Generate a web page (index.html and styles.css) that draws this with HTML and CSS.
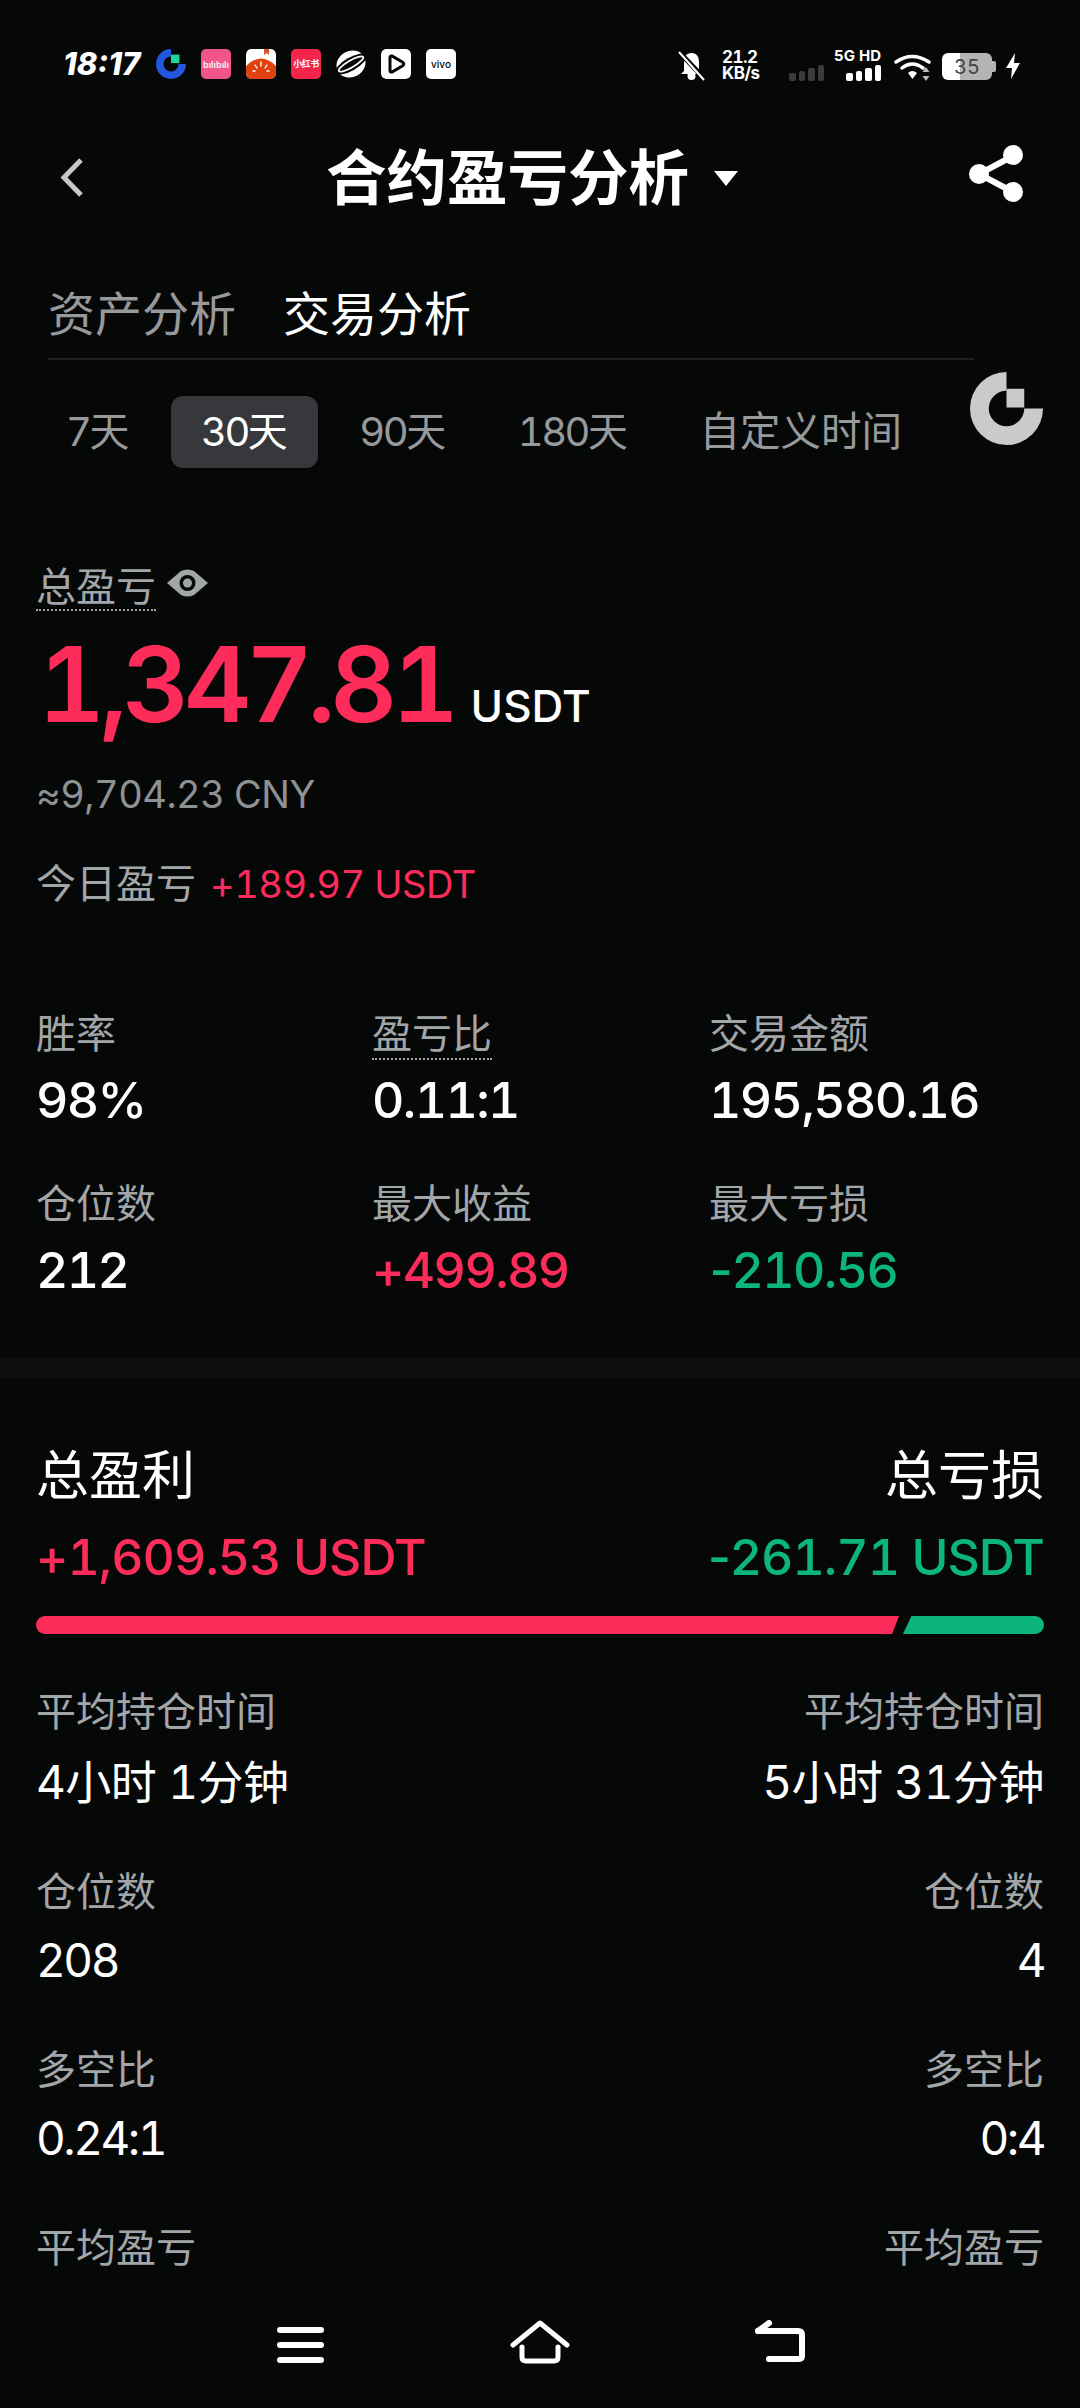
FILE: index.html
```html
<!DOCTYPE html>
<html lang="zh-CN">
<head>
    <meta charset="UTF-8">
    <meta name="viewport" content="width=device-width, initial-scale=1.0">
    <title>合约盈亏分析</title>
    <link rel="stylesheet" href="styles.css">
</head>
<body>
    <div class="page">
        <div class="main">
            <div class="statusbar">
                <span class="time">18:17</span>
                <div class="apps">
                    <svg class="app" viewBox="-16 -16 32 32"><path d="M0-16A16 16 0 1 0 16 0H8A8 8 0 1 1 0-8Z" fill="#2456e0"/><rect x="0" y="-10" width="9" height="9" fill="#1fd69a"/></svg>
                    <div class="app app-bili">bılıbılı</div>
                    <svg class="app" viewBox="0 0 30 30"><rect width="30" height="30" rx="5" fill="#fff"/><path d="M0 17Q15 2 30 17V25a5 5 0 0 1-5 5H5a5 5 0 0 1-5-5Z" fill="#e0430f"/><path d="M18 0h5v6l-2.500-2L18 6Z" fill="#d9502e"/><path d="M15 13v4M9 16l2 3M21 16l-2 3M7 22h2M21 22h2" stroke="#fff" stroke-width="1.300" stroke-linecap="round"/></svg>
                    <div class="app app-red">小红书</div>
                    <svg class="app" viewBox="-15 -15 30 30"><ellipse rx="15" ry="13" transform="rotate(-30)" fill="#fff"/><ellipse rx="18" ry="6.500" transform="rotate(-30)" fill="#060808"/><ellipse rx="14" ry="3.500" transform="rotate(-30)" fill="none" stroke="#fff" stroke-width="1.800"/></svg>
                    <svg class="app" viewBox="0 0 30 30"><rect width="30" height="30" rx="5" fill="#fff"/><path d="M9 8.500Q9 6.500 11 7L22 13.500Q23.500 15 22 16.500L11 23Q9 23.500 9 21.500Z" fill="none" stroke="#060808" stroke-width="3"/></svg>
                    <div class="app app-vivo">vivo</div>
                </div>
                <div class="status-right">
                    <svg class="st-bell" viewBox="0 0 27 30"><path d="M13.500 2C8 2 6 6 6 11V20L3 23H24L21 20V11C21 6 19 2 13.500 2Z" fill="#fff"/><circle cx="13.500" cy="25" r="4" fill="#fff"/><path d="M1 1L27 28" stroke="#060808" stroke-width="5"/><path d="M1 1L26 29" stroke="#fff" stroke-width="2"/></svg>
                    <div class="st-speed"><span>21.2</span><span>KB/s</span></div>
                    <div class="bars bars-dim"><i></i><i></i><i></i><i></i></div>
                    <div class="st-5g"><span>5G HD</span><div class="bars"><i></i><i></i><i></i><i></i></div></div>
                    <svg class="st-wifi" viewBox="0 0 37 29"><path d="M2 10Q18-1 35 10M8 16Q18 8 29 16" fill="none" stroke="#fff" stroke-width="3.500" stroke-linecap="round"/><path d="M14 21Q18 17 23 21L18.500 27Z" fill="#fff"/><path d="M32 15l3.500 5h-7ZM32 29l3.500-5h-7Z" fill="#bbb"/></svg>
                    <div class="battery"><span>35</span></div>
                    <svg class="st-bolt" viewBox="0 0 14 26"><path d="M9 0L0 15H6L5 26L14 10H8Z" fill="#fff"/></svg>
                </div>
            </div>

            <div class="navbar">
                <svg class="nav-back" viewBox="0 0 24 39"><path d="M21 2L4 19.500L21 37" fill="none" stroke="#c6c8c8" stroke-width="5"/></svg>
                <div class="nav-title"><span>合约盈亏分析</span><i class="caret"></i></div>
                <svg class="nav-share" viewBox="0 0 54 57"><path d="M44 11L10 29L44 47" fill="none" stroke="#fff" stroke-width="6"/><circle cx="44" cy="10" r="10" fill="#fff"/><circle cx="10" cy="29" r="10" fill="#fff"/><circle cx="44" cy="47" r="10" fill="#fff"/></svg>
            </div>

            <div class="tabs">
                <span>资产分析</span>
                <span class="on">交易分析</span>
            </div>

            <div class="periods">
                <span class="period">7天</span>
                <span class="period on">30天</span>
                <span class="period">90天</span>
                <span class="period">180天</span>
                <span class="period">自定义时间</span>
                <svg class="period-logo" viewBox="-37 -37 74 74"><path d="M0-37A37 37 0 1 0 37 0H18A18 18 0 1 1 0-18Z" fill="#c9cbcb"/><rect x="0" y="-20" width="18" height="19" fill="#c9cbcb"/></svg>
            </div>

            <div class="summary">
                <div class="sum-label"><span class="dotted">总盈亏</span>
                    <svg class="eye" viewBox="0 0 41 28"><path d="M0 14L14 2Q20.500-1 27 2L41 14L27 26Q20.500 29 14 26Z" fill="#a3a6a8"/><circle cx="20.500" cy="14" r="8" fill="#060808"/><circle cx="20.500" cy="14" r="4.500" fill="#a3a6a8"/></svg>
                </div>
                <div class="sum-amount"><b>1,347.81</b><span>USDT</span></div>
                <div class="sum-cny">≈9,704.23 CNY</div>
                <div class="sum-today"><span class="grey-cn">今日盈亏</span><span class="red">+189.97 USDT</span></div>
            </div>

            <div class="stats">
                <div class="stat"><div class="stat-label">胜率</div><div class="stat-value">98%</div></div>
                <div class="stat"><div class="stat-label"><span class="dotted">盈亏比</span></div><div class="stat-value">0.11:1</div></div>
                <div class="stat"><div class="stat-label">交易金额</div><div class="stat-value">195,580.16</div></div>
                <div class="stat"><div class="stat-label">仓位数</div><div class="stat-value">212</div></div>
                <div class="stat"><div class="stat-label">最大收益</div><div class="stat-value red">+499.89</div></div>
                <div class="stat"><div class="stat-label">最大亏损</div><div class="stat-value green"><span class="minus">-</span>210.56</div></div>
            </div>

            <div class="band"></div>

            <div class="compare">
                <div class="cmp-head">
                    <div><div class="cmp-title">总盈利</div><div class="cmp-amount red">+1,609.53 USDT</div></div>
                    <div class="right"><div class="cmp-title">总亏损</div><div class="cmp-amount green"><span class="minus">-</span>261.71 USDT</div></div>
                </div>
                <div class="ratio"><div class="ratio-win"></div><div class="ratio-loss"></div></div>
                <div class="cmp-row first">
                    <div><div class="cmp-label">平均持仓时间</div><div class="cmp-value cn">4小时 1分钟</div></div>
                    <div class="right"><div class="cmp-label">平均持仓时间</div><div class="cmp-value cn">5小时 31分钟</div></div>
                </div>
                <div class="cmp-row">
                    <div><div class="cmp-label">仓位数</div><div class="cmp-value">208</div></div>
                    <div class="right"><div class="cmp-label">仓位数</div><div class="cmp-value">4</div></div>
                </div>
                <div class="cmp-row">
                    <div><div class="cmp-label">多空比</div><div class="cmp-value">0.24:1</div></div>
                    <div class="right"><div class="cmp-label">多空比</div><div class="cmp-value">0:4</div></div>
                </div>
                <div class="cmp-row">
                    <div><div class="cmp-label">平均盈亏</div></div>
                    <div class="right"><div class="cmp-label">平均盈亏</div></div>
                </div>
            </div>
        </div>

        <div class="sysnav">
            <svg class="sys-menu" viewBox="0 0 47 36"><path d="M3 3H44M3 18H44M3 33H44" stroke="#fff" stroke-width="6" stroke-linecap="round"/></svg>
            <svg class="sys-home" viewBox="0 0 60 44"><path d="M3 24L30 2L57 24" fill="none" stroke="#fff" stroke-width="5" stroke-linecap="round" stroke-linejoin="round" transform="translate(0 1)"/><path d="M12 27V37Q12 41 16 41H44Q48 41 48 37V27" fill="none" stroke="#fff" stroke-width="5" stroke-linecap="round"/></svg>
            <svg class="sys-back" viewBox="0 0 50 42"><path d="M3 11H43Q47 11 47 15V36Q47 39 43 39H14" fill="none" stroke="#fff" stroke-width="6" stroke-linecap="round"/><path d="M3 11L14 3" fill="none" stroke="#fff" stroke-width="6" stroke-linecap="round"/></svg>
        </div>
    </div>
</body>
</html>
```

FILE: styles.css
```css
*{
    box-sizing: border-box;
}
body{
    margin: 0;
    background-color: #060808;
    color: #fff;
    font-family: "Inter", "Noto Sans CJK SC", sans-serif;
    font-feature-settings: "tnum";
}
.page{
    width: 1080px;
    height: 2408px;
    display: flex;
    flex-direction: column;
    overflow: hidden;
}
.main{
    flex: 1;
    min-height: 0;
    overflow: hidden;
}
.red{ color: #fe2c5a; }
.green{ color: #0cb57c; }
.right{ text-align: right; }
.dotted{
    display: inline-block;
    border-bottom: 2px dotted #a3a6a8;
}
.minus{
    margin-left: -4px;
    letter-spacing: -6px;
}

/* status bar */
.statusbar{
    height: 128px;
    padding: 49px 60px 0 63px;
    display: flex;
    align-items: flex-start;
}
.time{
    width: 93px;
    height: 30px;
    line-height: 30px;
    font-size: 31px;
    font-weight: 800;
    font-style: italic;
    font-feature-settings: normal;
}
.apps{
    display: flex;
    gap: 15px;
}
.app{
    width: 30px;
    height: 30px;
    display: block;
    border-radius: 5px;
    text-align: center;
    overflow: hidden;
    white-space: nowrap;
}
.app-bili{
    background-color: #f2558c;
    font-size: 9px;
    font-weight: 700;
    line-height: 32px;
    color: #ffe3ec;
}
.app-red{
    background-color: #f3254a;
    font-size: 9px;
    font-weight: 700;
    line-height: 30px;
    letter-spacing: -0.5px;
}
.app-vivo{
    background-color: #fff;
    color: #060808;
    font-size: 10px;
    font-weight: 500;
    line-height: 30px;
}
.status-right{
    margin-left: auto;
    display: flex;
    align-items: flex-end;
    height: 32px;
}
.st-bell{
    width: 27px;
    height: 30px;
}
.st-speed{
    margin-left: 17px;
    width: 40px;
    display: flex;
    flex-direction: column;
    font-size: 17px;
    font-weight: 700;
    line-height: 16px;
    letter-spacing: -0.5px;
    white-space: nowrap;
}
.bars{
    display: flex;
    align-items: flex-end;
    gap: 3px;
    height: 16px;
}
.bars i{
    display: block;
    width: 6.5px;
    border-radius: 2px;
    background-color: #fff;
}
.bars i:nth-child(1){ height: 8px; }
.bars i:nth-child(2){ height: 10px; }
.bars i:nth-child(3){ height: 13px; }
.bars i:nth-child(4){ height: 16px; }
.bars-dim{
    margin-left: 27px;
}
.bars-dim i{
    background-color: #3a3b3c;
}
.st-5g{
    margin-left: 10px;
    width: 47px;
    display: flex;
    flex-direction: column;
    align-items: flex-end;
    font-size: 15px;
    font-weight: 700;
    line-height: 15px;
    white-space: nowrap;
}
.st-5g span{
    margin-bottom: 2px;
}
.st-wifi{
    margin-left: 13px;
    width: 37px;
    height: 29px;
}
.battery{
    position: relative;
    margin: 0 4px 1px 11px;
    width: 50px;
    height: 27px;
    border-radius: 6px;
    background: linear-gradient(to right, #fff 36%, #b4b4b4 36%);
    font-size: 20px;
    line-height: 28px;
    text-align: center;
    color: #444;
}
.battery::after{
    content: "";
    position: absolute;
    right: -4px;
    top: 8px;
    width: 4px;
    height: 11px;
    border-radius: 0 2px 2px 0;
    background-color: #b4b4b4;
}
.st-bolt{
    margin-left: 10px;
    margin-bottom: 2px;
    width: 14px;
    height: 26px;
}

/* title */
.navbar{
    height: 100px;
    position: relative;
    display: flex;
    align-items: center;
    justify-content: center;
}
.nav-back{
    position: absolute;
    left: 60px;
    top: 30px;
    width: 24px;
    height: 39px;
}
.nav-title{
    display: flex;
    align-items: center;
    font-size: 60.500px;
    font-weight: 700;
    line-height: 70px;
    margin-left: -16px;
}
.caret{
    margin-left: 25px;
    width: 0;
    height: 0;
    border-left: 12px solid transparent;
    border-right: 12px solid transparent;
    border-top: 15px solid #fff;
}
.nav-share{
    position: absolute;
    left: 969px;
    top: 17px;
    width: 54px;
    height: 57px;
}

/* tabs */
.tabs{
    margin: 0 106px 0 48px;
    padding: 62px 0 21px;
    height: 132px;
    display: flex;
    gap: 47px;
    font-size: 47px;
    line-height: 48px;
    color: #97999b;
    border-bottom: 2px solid #1e2021;
}
.tabs .on{
    color: #fff;
}
.periods{
    margin-top: 12px;
    padding-left: 36px;
    display: flex;
    align-items: flex-start;
    gap: 14px;
}
.period{
    margin-top: 24px;
    height: 72px;
    padding: 0 30px;
    line-height: 72px;
    font-size: 40px;
    letter-spacing: -2.500px;
    color: #97999b;
    border-radius: 12px;
    white-space: nowrap;
}
.period:last-of-type{
    letter-spacing: 0;
    font-size: 40.500px;
}
.period.on{
    padding-right: 33px;
    margin-right: -3px;
    background-color: #37383c;
    color: #fff;
}
.period-logo{
    position: absolute;
    left: 970px;
    top: 372px;
    width: 73px;
    height: 73px;
}

/* total */
.summary{
    margin-top: 97px;
    padding: 0 36px;
}
.sum-label{
    display: flex;
    align-items: flex-start;
    height: 46px;
    font-size: 40px;
    line-height: 44px;
    color: #a3a6a8;
}
.eye{
    margin: 4px 0 0 11px;
    width: 41px;
    height: 28px;
}
.sum-amount{
    margin-top: 21px;
    height: 104px;
    padding-left: 2px;
    line-height: 104px;
    white-space: nowrap;
}
.sum-amount b{
    font-size: 104px;
    font-weight: 600;
    letter-spacing: -5.500px;
    color: #fe2c5a;
}
.sum-amount span{
    margin-left: 17px;
    font-size: 44px;
    font-weight: 500;
}
.sum-cny{
    margin-top: 34px;
    font-size: 38px;
    line-height: 48px;
    letter-spacing: -0.5px;
    color: #8f9294;
}
.sum-today{
    margin-top: 42px;
    display: flex;
    gap: 14px;
    font-size: 38px;
    line-height: 48px;
    letter-spacing: -0.5px;
}
.grey-cn{
    font-size: 40px;
    letter-spacing: 0;
    color: #a3a6a8;
}

/* numbers */
.stats{
    margin-top: 102px;
    padding-left: 36px;
    display: grid;
    grid-template-columns: 336px 337px 1fr;
    row-gap: 52px;
}
.stat-label{
    height: 48px;
    font-size: 40px;
    line-height: 48px;
    color: #a3a6a8;
}
.stat-value{
    margin-top: 14px;
    font-size: 50px;
    font-weight: 500;
    line-height: 56px;
    letter-spacing: -1.600px;
}
.band{
    margin-top: 60px;
    height: 20px;
    background-color: #0d0f10;
}

/* win / loss */
.compare{
    margin-top: 68px;
    padding: 0 36px;
}
.cmp-head, .cmp-row{
    display: flex;
    justify-content: space-between;
}
.cmp-title{
    font-size: 53px;
    line-height: 60px;
}
.cmp-amount{
    margin-top: 23px;
    font-size: 50px;
    font-weight: 500;
    line-height: 56px;
    letter-spacing: -1px;
}
.ratio{
    margin-top: 31px;
    height: 18px;
    display: flex;
    gap: 5px;
}
.ratio-win{
    width: 863px;
    background-color: #fe2c5a;
    border-radius: 9px 0 0 9px;
    clip-path: polygon(0 0, 100% 0, 99.2% 100%, 0 100%);
}
.ratio-loss{
    flex: 1;
    margin-left: -1px;
    background-color: #0cb57c;
    border-radius: 0 9px 9px 0;
    clip-path: polygon(6% 0, 100% 0, 100% 100%, 0 100%);
}
.cmp-row{
    margin-top: 60px;
}
.cmp-row.first{
    margin-top: 54px;
}
.cmp-label{
    font-size: 40px;
    line-height: 48px;
    color: #a3a6a8;
}
.cmp-value{
    margin-top: 18px;
    font-size: 46px;
    line-height: 52px;
    letter-spacing: -2.500px;
}
.cmp-value.cn{
    margin-top: 20px;
    letter-spacing: -0.5px;
}

/* system nav */
.sysnav{
    height: 108px;
    position: relative;
    flex-shrink: 0;
    background-color: #060808;
}
.sysnav svg{
    position: absolute;
}
.sys-menu{
    left: 277px;
    top: 27px;
    width: 47px;
    height: 36px;
}
.sys-home{
    left: 510px;
    top: 20px;
    width: 60px;
    height: 44px;
}
.sys-back{
    left: 755px;
    top: 20px;
    width: 50px;
    height: 42px;
}
```
